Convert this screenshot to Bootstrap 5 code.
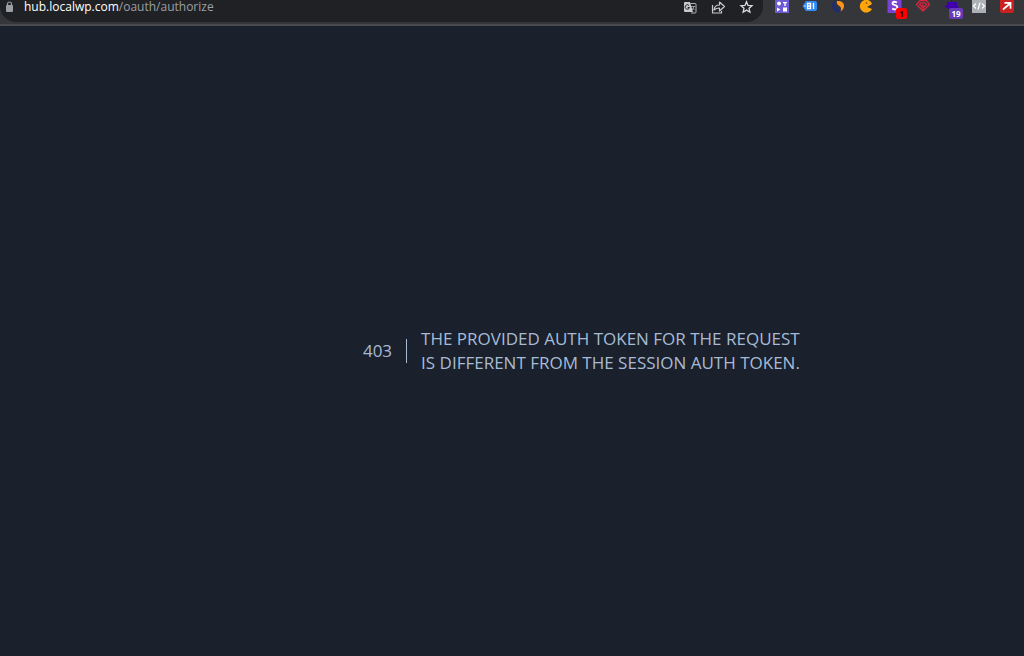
<!DOCTYPE html>
<html lang="en">
<head>
<meta charset="utf-8">
<meta name="viewport" content="width=device-width, initial-scale=1">
<title>Forbidden</title>
<link href="https://cdn.jsdelivr.net/npm/bootstrap@5.3.0/dist/css/bootstrap.min.css" rel="stylesheet">
<style>
body { background: #1a202c; font-family: "Open Sans", "Noto Sans", sans-serif; }
.toolbar { background: #35363a; height: 26px; padding-right: 4px; border-bottom: 2px solid #4a4b4f; }
.omnibox { background: #202124; height: 22px; margin-right: 5px; padding-right: 3px; border-radius: 0 0 16px 16px; }
.lock { width: 24px; height: 20px; }
.address { font-size: 12px; line-height: 14px; color: #9aa0a6; }
.address b { color: #fff; font-weight: 400; }
.tool { width: 28px; height: 20px; padding: 0; border: 0; background: none; }
.tool svg, .lock { display: block; }
.count { right: 1px; top: 8px; min-width: 11px; height: 11px; padding: 0 2px; border-radius: 2px; color: #fff; font-size: 8px; line-height: 11px; font-weight: 700; }
.count-red { background: #f00; color: #300; }
.count-violet { background: #673ab7; min-width: 14px; }
.error-page { padding: 20px 0 0 132px; }
.error-text { color: #a7bbd4; font-size: 17px; line-height: 24px; }
.code { padding: 0 14px; border-right: 1px solid #a7bbd4; }
.reason { width: 400px; padding-left: 14px; }
</style>
</head>
<body class="d-flex flex-column vh-100 overflow-hidden">
<header class="toolbar d-flex align-items-start flex-shrink-0">
  <div class="omnibox d-flex align-items-start flex-grow-1">
    <svg class="lock" viewBox="0 0 24 20" aria-hidden="true"><path d="M7.500 6V4a2 2 0 0 1 4 0v2" fill="none" stroke="#9aa0a6" stroke-width="1.200"/><rect x="6" y="5" width="7" height="7" rx="1" fill="#9aa0a6"/></svg>
    <div class="address flex-grow-1"><b>hub.localwp.com</b>/oauth/authorize</div>
    <button class="tool" aria-label="Translate"><svg width="28" height="20"><path d="M9 2h5l3 10h-8q-1 0-1-1V3q0-1 1-1z" fill="#c8cacc"/><path d="M14.500 3.500H19q1 0 1 1V12q0 1-1 1h-4" fill="none" stroke="#b2b4b7"/><path d="M13 5.500a2.200 2.200 0 1 0 .5 2H11.700" fill="none" stroke="#202124"/><path d="M15 6.500h4M18 6.500q-.5 2-2 3.500M16.500 8l2 2" fill="none" stroke="#b2b4b7" stroke-width=".8"/></svg></button>
    <button class="tool" aria-label="Share"><svg width="28" height="20" fill="none" stroke="#c8cacc" stroke-width="1.200"><path d="M8.500 5v8h9v-2M10 10q.5-5 5.500-5V2l5 4.500-5 4.500V8q-3.500 0-5.500 2z" stroke-linejoin="round"/></svg></button>
    <button class="tool" aria-label="Bookmark"><svg width="28" height="20"><path d="M14.500 1.800l1.500 3.600 4 .3-3 2.600.9 3.900-3.400-2.100-3.400 2.100.9-3.900-3-2.600 4-.3z" fill="none" stroke="#dadce0" stroke-width="1.300"/></svg></button>
  </div>
  <button class="tool" aria-label="Shapes extension"><svg width="28" height="20"><path d="M7 0h14v13H7z" fill="#6c5bd2"/><circle cx="11" cy="3.500" r="2" fill="#fff"/><path d="M15 2h4v1.300h-1.300V6h-1.400V3.300H15zM9 7.500l3.500 2L9 11.500zM15 7.500h4v4h-4z" fill="#fff"/></svg></button>
  <button class="tool" aria-label="Tag extension"><svg width="28" height="20"><path d="M10 1h9q2 0 2 2v6q0 2-2 2h-9L6.500 6z" fill="#3489f5"/><circle cx="9" cy="6" r=".7" fill="#fff"/><path d="M11.500 3.500h3v5h-3zM11.500 6h3M17.500 3v6" fill="none" stroke="#fff" stroke-width="1.300"/></svg></button>
  <button class="tool" aria-label="Swirl extension"><svg width="28" height="20"><path d="M12.500 0A6.500 6.500 0 0 0 8 7q1 5 6 5.500 4 0 5-4-2 3-4 1-1-3-2.500-4Q10 4 12.500 0z" fill="#222e65"/><path d="M13 1q6-.5 7 4 .4 4-3.500 6.500 1.500-4-1-5.500Q12 4 13 1z" fill="#ff9518"/></svg></button>
  <button class="tool" aria-label="Yellow extension"><svg width="28" height="20"><path d="M18 1A6.400 6.400 0 1 0 20 9l-5-2 5-3q-.7-2-2-3z" fill="#ffa50b"/><circle cx="14.500" cy="3" r=".8" fill="#6b4300"/></svg></button>
  <button class="tool position-relative" aria-label="S extension, 1 notification"><svg width="28" height="20"><path d="M7.500 0h14v13h-14z" fill="#7942d1"/><path d="M17 2.500q-4-1.800-4.500.6 0 1.600 2.400 2 2.800.6 2.300 2.800-1.200 2.600-5 .8" fill="none" stroke="#fff" stroke-width="1.900"/></svg><span class="count count-red position-absolute">1</span></button>
  <button class="tool" aria-label="Gem extension"><svg width="28" height="20" fill="none" stroke="#d9253d" stroke-width="1.300"><path d="M12 .5h6.500L21.500 4.500 15 11 8.500 4.500 12 .5M15 11V8L11.500 4.500 13 2.800h4L18.500 4.500 16 7l-2-2.500"/></svg></button>
  <button class="tool position-relative" aria-label="Violet extension, 19 notifications"><svg width="28" height="20"><path d="M15 0l2 2h4v3l2 2-5 3-3 2-2-3-5-3 3-1V2h4z" fill="#4100ad"/></svg><span class="count count-violet position-absolute">19</span></button>
  <button class="tool" aria-label="Code extension"><svg width="28" height="20"><path d="M8 0h14v13H8z" fill="#abb1b5"/><path d="M12 3.500L9.500 6l2.500 2.500M18 3.500L20.500 6 18 8.500M16 2.500l-2 7" fill="none" stroke="#fff" stroke-width="1.200"/></svg></button>
  <button class="tool" aria-label="Arrow extension"><svg width="28" height="20"><path d="M8 0h14v11q0 2-2 2H10q-2 0-2-2z" fill="#c9211f"/><path d="M11 9.500L18 3.500M12.500 2.800h6v6" fill="none" stroke="#fff" stroke-width="1.700"/></svg></button>
</header>
<main class="error-page flex-grow-1 d-flex align-items-center justify-content-center">
  <div class="error-text d-flex align-items-center">
    <div class="code">403</div>
    <div class="reason text-uppercase">The provided auth token for the request is different from the session auth token.</div>
  </div>
</main>
<script src="https://cdn.jsdelivr.net/npm/bootstrap@5.3.0/dist/js/bootstrap.bundle.min.js"></script>
</body>
</html>
